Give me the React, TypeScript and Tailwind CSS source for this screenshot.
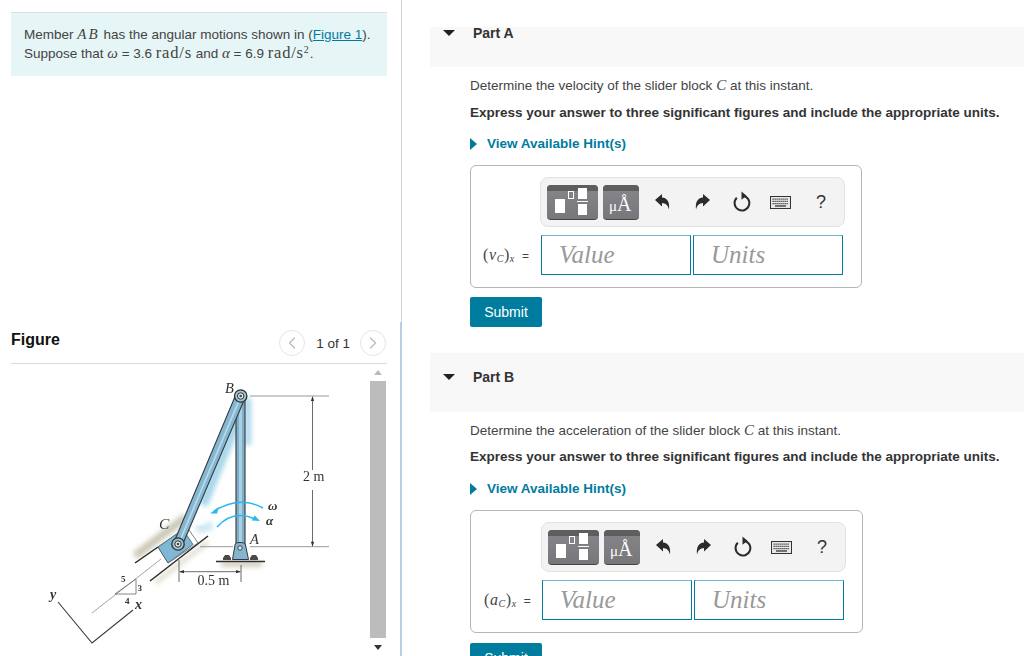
import React from "react";
import { ChevronLeft, ChevronRight } from "lucide-react";

const SANS = "font-['Liberation_Sans',Arial,sans-serif]";
const SERIF = "font-['Liberation_Serif','Times_New_Roman',serif]";

const Mv = ({ children }: { children: React.ReactNode }) => (
  <span className={`${SERIF} italic text-[15px] leading-none`}>{children}</span>
);
const Mr = ({ children }: { children: React.ReactNode }) => (
  <span className={`${SERIF} text-[16.5px] leading-none tracking-[0.8px]`}>{children}</span>
);

const Triangle = () => (
  <svg width="12" height="6" viewBox="0 0 12 6" className="shrink-0">
    <path d="M0 0h12L6 6z" fill="#222" />
  </svg>
);

const UndoIcon = ({ flip }: { flip?: boolean }) => (
  <svg width="15" height="16" viewBox="0 0 15 16" className={flip ? "-scale-x-100" : ""}>
    <path d="M0 6L7 0V3.4C11.5 3.8 15 6.8 14 15.5C12.8 11 10.8 9.2 7 9V12.5z" fill="#2b2b2b" />
  </svg>
);

const ResetIcon = () => (
  <svg width="20" height="22" viewBox="0 0 20 22">
    <path d="M10 4.7A7.4 7.4 0 1 1 4.8 6.8" fill="none" stroke="#2b2b2b" strokeWidth="2" />
    <path d="M9.5 0.6v8.2l5-4.1z" fill="#2b2b2b" />
  </svg>
);

const KeyboardIcon = () => (
  <svg width="21" height="13" viewBox="0 0 21 13">
    <rect x="0.5" y="0.5" width="20" height="12" fill="#e8e8e8" stroke="#333" />
    <path d="M2.5 3.2h16M2.5 5.4h16M2.5 7.6h16" stroke="#333" strokeWidth="1.3" strokeDasharray="1.2 0.8" />
    <path d="M5 10h11" stroke="#333" strokeWidth="1.3" />
  </svg>
);

const ToolButton = ({ className, children }: { className: string; children: React.ReactNode }) => (
  <div className={`relative h-[35px] overflow-hidden rounded-[4px] border-b border-[#444] bg-gradient-to-b from-[#87868b] to-[#77767a] ${className}`}>
    <div className="h-[6px] bg-[#5e5e5e]" />
    {children}
  </div>
);

const Toolbar = () => (
  <div className="flex h-[50px] items-center rounded-[8px] border border-[#e2e2e2] bg-[#f3f3f3] pl-[6px]">
    <ToolButton className="w-[51px]">
      <div className="absolute bottom-[6px] left-[8px] h-[14px] w-[10px] bg-white" />
      <div className="absolute left-[21px] top-[6px] h-[8px] w-[6px] border border-white" />
      <div className="absolute left-[31px] top-[3px] h-[11px] w-[9px] bg-white" />
      <div className="absolute left-[30px] top-[16px] h-[1px] w-[11px] bg-white" />
      <div className="absolute left-[31px] top-[19px] h-[11px] w-[9px] bg-white" />
    </ToolButton>
    <ToolButton className="ml-[5px] w-[36px]">
      <span className={`${SERIF} absolute left-[6px] top-[7px] text-[15px] leading-[24px] text-white`}>
        μ<span className="text-[20px]">Å</span>
      </span>
    </ToolButton>
    <div className="ml-[16px] flex w-[15px] justify-center">
      <UndoIcon />
    </div>
    <div className="ml-[25px] flex w-[15px] justify-center">
      <UndoIcon flip />
    </div>
    <div className="ml-[22px] flex w-[20px] justify-center">
      <ResetIcon />
    </div>
    <div className="ml-[18px] flex w-[21px] justify-center">
      <KeyboardIcon />
    </div>
    <span className={`${SANS} ml-[25px] text-[18px] leading-5 text-[#333]`}>?</span>
  </div>
);

const AnswerField = ({ placeholder }: { placeholder: string }) => (
  <div className={`${SERIF} flex h-[40px] w-[150px] items-center border border-[#007c9e] border-t-[#6fb6cb] pl-[17px] text-[25px] italic text-[#999]`}>
    {placeholder}
  </div>
);

interface PartProps {
  title: string;
  headerClass: string;
  boxClass: string;
  toolbarClass: string;
  rowClass: string;
  noun: string;
  symbol: string;
  boldGap: string;
  hintGap: string;
  submitGap: string;
}

const Part = ({ title, headerClass, boxClass, toolbarClass, rowClass, noun, symbol, boldGap, hintGap, submitGap }: PartProps) => (
  <section>
    <div className={`ml-[1px] flex items-start bg-[#f8f8f8] ${headerClass}`}>
      <div className="ml-[13px] mt-[7px] flex w-[30px]">
        <Triangle />
      </div>
      <h3 className="text-[14px] font-bold leading-5 text-[#333]">{title}</h3>
    </div>
    <div className="ml-[41px] pt-[9px]">
      <p className="text-[13.5px] leading-5 text-[#444]">
        Determine the {noun} of the slider block <Mv>C</Mv> at this instant.
      </p>
      <p className={`whitespace-nowrap text-[13.5px] font-bold leading-5 text-[#333] ${boldGap}`}>
        Express your answer to three significant figures and include the appropriate units.
      </p>
      <div className={`flex items-center text-[13.5px] font-bold leading-5 text-[#007c9e] ${hintGap}`}>
        <svg width="7" height="12" viewBox="0 0 7 12" className="mr-[10px]">
          <path d="M0 0l7 6-7 6z" fill="#007c9e" />
        </svg>
        View Available Hint(s)
      </div>
      <div className={`mt-[11px] rounded-[6px] border border-[#b5b5b5] ${boxClass}`}>
        <div className={`mt-[11px] w-[305px] ${toolbarClass}`}>
          <Toolbar />
        </div>
        <div className={`mt-[8px] flex items-center ${rowClass}`}>
          <span className={`${SERIF} w-[70px] whitespace-nowrap pl-[12px] text-[16px] leading-5 tracking-[0.6px] text-[#444]`}>
            (<i>{symbol}</i>
            <sub className="text-[10px] italic">C</sub>)<sub className="text-[10px] italic">x</sub>
            <span className={`${SANS} ml-[7px] text-[12px]`}>=</span>
          </span>
          <div className="flex gap-[2px]">
            <AnswerField placeholder="Value" />
            <AnswerField placeholder="Units" />
          </div>
        </div>
      </div>
      <button className={`flex h-[30px] w-[72px] items-center justify-center rounded-[2px] bg-[#007c9e] text-[14px] text-white ${submitGap}`}>
        Submit
      </button>
    </div>
  </section>
);

const MechanismFigure = () => (
  <svg width="359" height="292" viewBox="11 364 359 292" className="block shrink-0">
    <defs>
      <filter id="soft" x="-20%" y="-20%" width="140%" height="140%">
        <feGaussianBlur stdDeviation="0.4" />
      </filter>
      <filter id="glow" x="-50%" y="-50%" width="200%" height="200%">
        <feGaussianBlur stdDeviation="2.4" />
      </filter>
    </defs>
    {/* painted shadows */}
    <g filter="url(#glow)">
      <path d="M135 556L186 517" stroke="#cbc8b6" strokeWidth="8" fill="none" />
      <path d="M155 583L208 542" stroke="#dad7c8" strokeWidth="4" fill="none" />
      <path d="M221 564H262" stroke="#cbc7b2" strokeWidth="5" fill="none" />
      <path d="M248 398L248 445" stroke="#a5d6ea" strokeWidth="6" fill="none" />
      <path d="M238 420L203 505" stroke="#a5d6ea" strokeWidth="9" fill="none" />
      <path d="M196 528L212 524" stroke="#cfe8f2" strokeWidth="12" fill="none" />
    </g>
    <path d="M197 523L209 517" stroke="#fff" strokeWidth="8" strokeLinecap="round" filter="url(#glow)" />
    <g filter="url(#soft)">
      {/* dimension lines */}
      <g stroke="#999" fill="none">
        <path d="M250 396H329M250 546.7H329M200 546.7H233" />
      </g>
      <g stroke="#444" fill="none" strokeWidth="0.8">
        <path d="M312.5 397V470M312.5 490V546" />
        <path d="M179 560V582M241 565V582M180 571.7H240" />
      </g>
      <path d="M312.5 396l-1.6 5h3.2zM312.5 546.7l-1.6-5h3.2zM179 571.7l5-1.6v3.2zM241 571.7l-5-1.6v3.2z" fill="#333" />

      {/* rails */}
      <path d="M135 563L158 547M150 581L208 536" stroke="#2a2a2a" strokeWidth="1.5" fill="none" />
      <path d="M92 613L161 559" stroke="#999" strokeWidth="0.9" fill="none" />
      <path d="M115 594L136 579V594z" stroke="#666" strokeWidth="0.8" fill="none" />
      <path d="M58 602L92 643L133 610" stroke="#3a3a3a" strokeWidth="1.1" fill="none" />

      {/* column AB */}
      <rect x="236" y="398" width="9" height="152" fill="#7faec9" stroke="#3f444a" strokeWidth="1.2" />
      <rect x="239" y="398" width="3" height="152" fill="#a8cfe2" />

      {/* slider block */}
      <path d="M158 547L187 527L198 543L168 563z" fill="#fff" stroke="#3d4a52" strokeWidth="0.7" />
      <path d="M158 547L183 529.5L193 544.5L168 563z" fill="#7fb8d4" stroke="#3d4a52" strokeWidth="0.7" />

      {/* bar BC */}
      <path d="M174.5 541L236.5 393L245 398L181.5 547z" fill="#85b6d2" stroke="#33393e" strokeWidth="1.1" />
      <path d="M179 543L241 396" stroke="#b7d9e8" strokeWidth="1.8" />

      {/* pin C */}
      <circle cx="178" cy="544" r="6.2" fill="#9fc4d6" stroke="#2e2e2e" strokeWidth="1.3" />
      <circle cx="178" cy="544" r="3.2" fill="#e6eef2" stroke="#2e2e2e" strokeWidth="1" />
      <circle cx="178" cy="544" r="1.3" fill="#444" />
      {/* pin B */}
      <circle cx="240.7" cy="396" r="6.2" fill="#9fc4d6" stroke="#2e2e2e" strokeWidth="1.3" />
      <circle cx="240.7" cy="396" r="3.2" fill="#e6eef2" stroke="#2e2e2e" strokeWidth="1" />
      <circle cx="240.7" cy="396" r="1.3" fill="#444" />

      {/* support A */}
      <path d="M232.5 559.5L235 545Q235 542.5 240 542.5T245.5 545L248.5 559.5z" fill="#85b4ce" stroke="#33393e" strokeWidth="1" />
      <circle cx="240" cy="548" r="2.2" fill="#dfe9ee" stroke="#333" strokeWidth="0.9" />
      <path d="M223 560h8v-2l-2-3h-4l-2 3zM250 560h8v-2l-2-3h-4l-2 3z" fill="#4a4a4a" />
      <path d="M216 561.5H265" stroke="#2e2e2e" strokeWidth="1.6" />

      {/* motion arrows */}
      <path d="M263 508Q240 495 214 511" stroke="#29b6f0" strokeWidth="1.5" fill="none" />
      <path d="M210 513.5l8.5-6.2-1.4 6.1z" fill="#29b6f0" />
      <path d="M217 527Q233 509 255 519" stroke="#29b6f0" strokeWidth="1.5" fill="none" />
      <path d="M260 521l-8.3-.6 3-5z" fill="#29b6f0" />

      {/* labels */}
      <g className={SERIF} fill="#333">
        <text x="225" y="393" fontSize="14.5" fontStyle="italic">B</text>
        <text x="159" y="529" fontSize="15.5" fontStyle="italic">C</text>
        <text x="250" y="544" fontSize="14.5" fontStyle="italic">A</text>
        <text x="268" y="510" fontSize="13" fontStyle="italic" fontWeight="bold">ω</text>
        <text x="266" y="525" fontSize="13" fontStyle="italic" fontWeight="bold">α</text>
        <text x="303" y="481" fontSize="14">2 m</text>
        <text x="197.5" y="585" fontSize="14">0.5 m</text>
        <text x="121" y="582" fontSize="9" fontWeight="bold">5</text>
        <text x="137.5" y="591" fontSize="9" fontWeight="bold">3</text>
        <text x="125" y="604" fontSize="9" fontWeight="bold">4</text>
        <text x="50" y="599" fontSize="14" fontStyle="italic" fontWeight="bold">y</text>
        <text x="135" y="609" fontSize="14" fontStyle="italic" fontWeight="bold">x</text>
      </g>
    </g>
  </svg>
);

const Pager = () => (
  <div className="flex items-center pb-[7px] pr-[1px] text-[13.5px] text-[#333]">
    <div className="flex h-[26px] w-[26px] items-center justify-center rounded-full border border-[#e5e5e5] text-[#bbb]">
      <ChevronLeft size={20} strokeWidth={1.5} />
    </div>
    <span className="ml-[11px] mr-[10px] translate-y-[1px]">1 of 1</span>
    <div className="flex h-[26px] w-[26px] items-center justify-center rounded-full border border-[#e5e5e5] text-[#bbb]">
      <ChevronRight size={20} strokeWidth={1.5} />
    </div>
  </div>
);

const ScrollBar = () => (
  <div className="flex w-[16px] flex-col items-center">
    <div className="flex h-[17px] items-center justify-center">
      <svg width="8" height="5" viewBox="0 0 8 5">
        <path d="M0 5h8L4 0z" fill="#bbb" />
      </svg>
    </div>
    <div className="h-[257px] w-full bg-[#bcbcbc]" />
    <div className="flex h-[18px] items-center justify-center">
      <svg width="8" height="5" viewBox="0 0 8 5">
        <path d="M0 0h8L4 5z" fill="#333" />
      </svg>
    </div>
  </div>
);

export default function App() {
  return (
    <div className={`${SANS} flex h-[656px] w-[1024px] overflow-hidden bg-white`}>
      {/* problem + figure */}
      <div className="h-[656px] w-[400px] shrink-0 pl-[11px] pt-[12px]">
        <div className="h-[64px] w-[376px] border-t border-[#dadfe0] bg-[#e6f5f6] px-[13px] pt-[12px] text-[13.5px] leading-[19px] text-[#444]">
          <p className="whitespace-nowrap">
            Member{" "}
            <span className="tracking-[2px]">
              <Mv>AB</Mv>
            </span>{" "}
            has the angular motions shown in (
            <span className="text-[#007c9e] underline">Figure 1</span>).
          </p>
          <p className="whitespace-nowrap">
            Suppose that <Mv>ω</Mv> = 3.6 <Mr>rad/s</Mr> and <Mv>α</Mv> = 6.9{" "}
            <Mr>
              rad/s<sup className="text-[10px]">2</sup>
            </Mr>
            .
          </p>
        </div>
        <div className="mt-[251px] flex h-[37px] w-[376px] items-end justify-between border-b border-[#d9d9d9]">
          <h2 className="pb-[13px] text-[16px] font-bold leading-5 text-[#111]">Figure</h2>
          <Pager />
        </div>
        <div className="flex w-[376px]">
          <MechanismFigure />
          <ScrollBar />
        </div>
      </div>

      {/* column divider */}
      <div className="flex h-[656px] w-[2px] shrink-0 flex-col">
        <div className="h-[322px] border-r border-[#cdd2d6]" />
        <div className="flex-1 bg-[#b9cee0]" />
      </div>

      {/* parts */}
      <div className="min-w-0 flex-1 pl-[27px]">
        <Part
          title="Part A"
          headerClass="mt-[23px] h-[44px] bg-gradient-to-b from-white from-[9%] to-[#f8f8f8] to-[9%]"
          boxClass="h-[123px] w-[392px]"
          toolbarClass="ml-[69px]"
          rowClass=""
          noun="velocity"
          symbol="v"
          boldGap="mt-[7px]"
          hintGap="mt-[11px]"
          submitGap="mt-[9px]"
        />
        <div className="mt-[26px]">
          <Part
            title="Part B"
            headerClass="h-[59px] pt-[14px]"
            boxClass="h-[123px] w-[393px]"
            toolbarClass="ml-[70px]"
            rowClass="ml-[1px]"
            noun="acceleration"
            symbol="a"
            boldGap="mt-[6px]"
            hintGap="mt-[12px]"
            submitGap="mt-[10px]"
          />
        </div>
      </div>
    </div>
  );
}
